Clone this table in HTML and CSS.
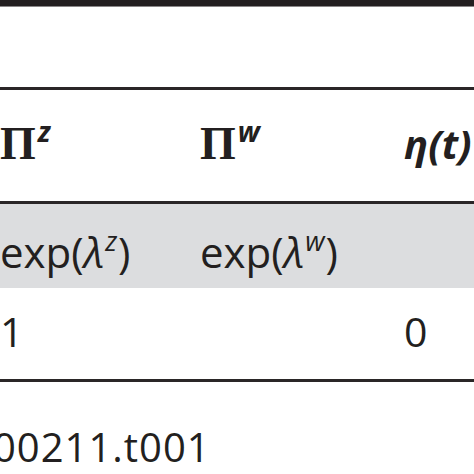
FILE: index.html
```html
<!DOCTYPE html>
<html lang="en">
<head>
<meta charset="utf-8">
<title>Table 1</title>
<link rel="stylesheet" href="styles.css">
</head>
<body>
<div class="page">
  <div class="rule-top"></div>
  <div class="title-space"></div>
  <div class="rule"></div>
  <div class="row head">
    <div class="cell"><span class="pi">Π</span><sup class="sup">z</sup></div>
    <div class="cell"><span class="pi">Π</span><sup class="sup">w</sup></div>
    <div class="cell eta">η(t)</div>
  </div>
  <div class="rule"></div>
  <div class="row shade">
    <div class="cell">exp(<i class="lam">λ</i><sup class="sup-n">z</sup>)</div>
    <div class="cell">exp(<i class="lam">λ</i><sup class="sup-n">w</sup>)</div>
    <div class="cell"></div>
  </div>
  <div class="row body">
    <div class="cell">1</div>
    <div class="cell"></div>
    <div class="cell">0</div>
  </div>
  <div class="rule"></div>
  <p class="caption">00211.t001</p>
</div>
</body>
</html>
```

FILE: styles.css
```css
html, body {
  margin: 0;
  padding: 0;
  background: #ffffff;
}
body {
  width: 474px;
  height: 474px;
  overflow: hidden;
  font-family: "Open Sans", "Noto Sans", sans-serif;
  color: #231f20;
}
.page {
  display: flex;
  flex-direction: column;
  width: 474px;
}
.rule-top {
  height: 6px;
  background: #231f20;
  border-bottom: 1px solid #8a8788;
}
.title-space {
  height: 80px;
}
.rule {
  height: 3px;
  background: #2a2627;
}
.row {
  display: grid;
  grid-template-columns: 200px 204px 1fr;
  align-items: center;
  box-sizing: border-box;
}
.cell {
  white-space: nowrap;
  line-height: 1;
}
.head {
  height: 111px;
  padding-bottom: 8px;
}
.pi {
  font-family: "Liberation Serif", "Times New Roman", serif;
  font-weight: bold;
  font-size: 46px;
}
.sup {
  font-family: "Open Sans", sans-serif;
  font-style: italic;
  font-weight: bold;
  font-size: 28px;
  vertical-align: 17px;
  margin-left: 2px;
}
.eta {
  font-family: "Open Sans", sans-serif;
  font-weight: bold;
  font-style: italic;
  font-size: 40px;
  padding-top: 4px;
}
.shade {
  height: 84px;
  background: #dcdddf;
  font-size: 42px;
  padding-top: 8px;
}
.lam {
  font-family: "Open Sans", sans-serif;
  font-style: italic;
  margin-right: 1px;
}
.sup-n {
  font-size: 27px;
  font-style: italic;
  vertical-align: 17px;
  margin-right: 1px;
}
.body {
  height: 91px;
  font-size: 41px;
  padding-bottom: 5px;
}
.caption {
  margin: 45px 0 0 -7px;
  font-size: 40px;
  letter-spacing: 1px;
  line-height: 1;
  white-space: nowrap;
}
```
